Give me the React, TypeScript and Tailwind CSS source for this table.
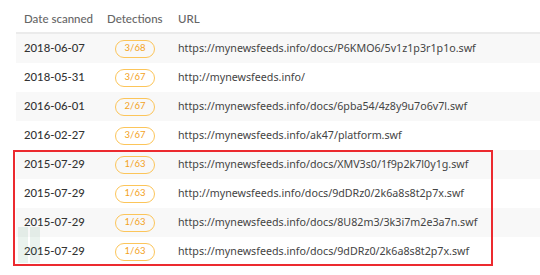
const rows = [
  { date: '2018-06-07', det: '3/68', url: 'https://mynewsfeeds.info/docs/P6KMO6/5v1z1p3r1p1o.swf' },
  { date: '2018-05-31', det: '3/67', url: 'http://mynewsfeeds.info/' },
  { date: '2016-06-01', det: '2/67', url: 'https://mynewsfeeds.info/docs/6pba54/4z8y9u7o6v7l.swf' },
  { date: '2016-02-27', det: '3/67', url: 'https://mynewsfeeds.info/ak47/platform.swf' },
  { date: '2015-07-29', det: '1/63', url: 'https://mynewsfeeds.info/docs/XMV3s0/1f9p2k7l0y1g.swf' },
  { date: '2015-07-29', det: '1/63', url: 'http://mynewsfeeds.info/docs/9dDRz0/2k6a8s8t2p7x.swf' },
  { date: '2015-07-29', det: '1/63', url: 'https://mynewsfeeds.info/docs/8U82m3/3k3i7m2e3a7n.swf' },
  { date: '2015-07-29', det: '1/63', url: 'https://mynewsfeeds.info/docs/9dDRz0/2k6a8s8t2p7x.swf' },
];

function Row({ r, i }: { r: (typeof rows)[number]; i: number }) {
  return (
    <div className={`flex items-center h-[29px] ${i % 2 === 0 ? 'bg-[#f8f8f8]' : 'bg-white'}`}>
      <div className="w-[99px] pl-2 text-[11.3px] font-medium text-[#333] font-['Lato',sans-serif]">{r.date}</div>
      <div className="w-[63px] flex">
        <span className="w-[40px] h-[18px] rounded-full border border-[#fcc55a] flex items-center justify-center text-[9.5px] text-[#f3a21c] font-['Lato',sans-serif]">
          {r.det}
        </span>
      </div>
      <div className="text-[10.7px] text-[#444] font-['Noto_Sans',sans-serif] whitespace-nowrap">{r.url}</div>
    </div>
  );
}

export default function App() {
  return (
    <div className="w-[540px] h-[275px] bg-white overflow-hidden relative">
      <div className="ml-4">
        <div className="flex items-center h-[34px] pt-[6px] border-b-2 border-[#ebebeb] text-[11.5px] font-medium text-[#666] font-['Lato',sans-serif]">
          <div className="w-[99px] pl-2">Date scanned</div>
          <div className="w-[63px] -ml-[8px]">Detections</div>
          <div className="ml-[8px]">URL</div>
        </div>
        {rows.slice(0, 4).map((r, i) => (
          <Row key={i} r={r} i={i} />
        ))}
        <div className="relative">
          {rows.slice(4).map((r, i) => (
            <Row key={i} r={r} i={i} />
          ))}
          <div className="absolute -left-[3px] top-0 w-[480px] h-[116px] border-2 border-[#ec2a2f]" />
          <div className="absolute left-[2px] top-[77px] flex items-center gap-[2px] pointer-events-none">
            <div className="w-[10px] h-[36px] bg-[#2f8a5a]/10" />
            <div className="w-[10px] h-[36px] bg-[#2f8a5a]/10" />
          </div>
        </div>
      </div>
    </div>
  );
}
